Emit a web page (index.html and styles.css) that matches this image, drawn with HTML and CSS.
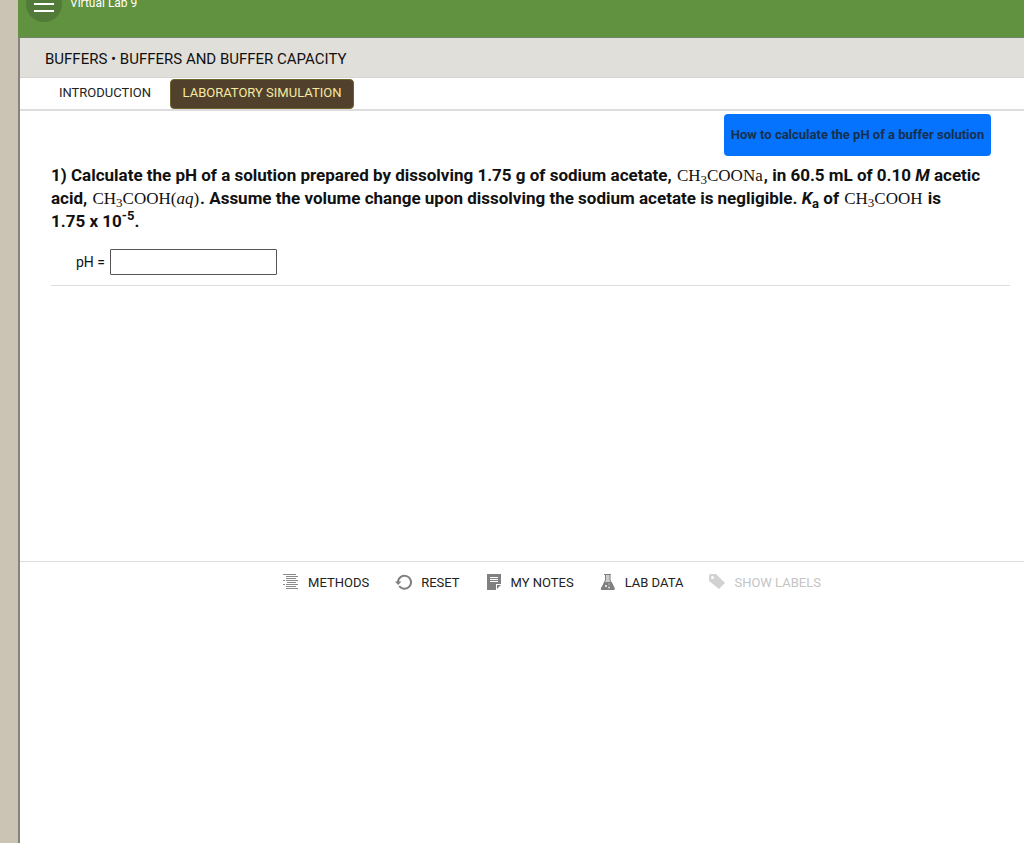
FILE: index.html
```html
<!DOCTYPE html>
<html lang="en">
<head>
    <meta charset="UTF-8">
    <meta name="viewport" content="width=device-width, initial-scale=1.0">
    <title>Virtual Lab 9</title>
    <link rel="stylesheet" href="styles.css">
</head>
<body>
    <div class="page">
        <header class="topbar">
            <button class="menu" type="button" aria-label="Menu">
                <svg width="20" height="18" viewBox="0 0 20 18" stroke="#fff" stroke-width="2">
                    <path d="M0 2h20M0 9h20M0 16h20"/>
                </svg>
            </button>
            <span class="lab-name">Virtual Lab 9</span>
        </header>

        <h1 class="title">BUFFERS • BUFFERS AND BUFFER CAPACITY</h1>

        <nav class="tabs">
            <a href="#introduction" class="tab">INTRODUCTION</a>
            <a href="#simulation" class="tab active">LABORATORY SIMULATION</a>
        </nav>

        <main class="content">
            <button class="help" type="button">How to calculate the pH of a buffer solution</button>
            <div class="question">
                <p class="prompt">
                    1) Calculate the pH of a solution prepared by dissolving 1.75 g of sodium acetate, <span class="chem">CH<sub>3</sub>COONa</span>, in 60.5 mL of 0.10 <em>M</em> acetic<br>
                    acid, <span class="chem">CH<sub>3</sub>COOH(<i>aq</i>)</span>. Assume the volume change upon dissolving the sodium acetate is negligible. <em>K</em><sub>a</sub> of <span class="chem">CH<sub>3</sub>COOH</span> is<br>
                    1.75 x 10<sup>-5</sup>.
                </p>
                <div class="answer">
                    <label for="ph">pH =</label>
                    <input type="text" id="ph">
                </div>
            </div>
        </main>

        <div class="toolbar">
            <button class="tool methods" type="button">
                <svg width="16" height="18" viewBox="0 0 16 18" stroke="#8a8a8a" stroke-width="1">
                    <path d="M0 1.5h13M3 3.5h12M3 5.5h10M0 7.5h2M3 7.5h12M4 9.5h9M0 11.5h2M3 11.5h12M3 13.5h10M3 15.5h12"/>
                </svg>
                METHODS
            </button>
            <button class="tool reset" type="button">
                <svg width="17" height="18" viewBox="0 0 17 18" fill="none">
                    <path d="M3 9A6.500 6.500 0 1 1 4.200 13" stroke="#808080" stroke-width="2"/>
                    <path d="M0 8.500h6.500L3.200 12z" fill="#808080"/>
                </svg>
                RESET
            </button>
            <button class="tool notes" type="button">
                <svg width="16" height="18" viewBox="0 0 16 18">
                    <path d="M1 1h14v10h-5v6H1z" fill="#808080"/>
                    <path d="M11 12h4l-4 4z" fill="#808080"/>
                    <path d="M4 4.5h8M4 6.5h8M4 8.5h8" stroke="#fff"/>
                </svg>
                MY NOTES
            </button>
            <button class="tool data" type="button">
                <svg width="16" height="18" viewBox="0 0 16 18">
                    <path d="M4 1.5h7" stroke="#808080"/>
                    <path d="M5.500 2v5L2 15v1.500h12V15L10 7V2" fill="#ccc" stroke="#808080"/>
                    <path d="M4.500 9h7l3 6v2H1v-2z" fill="#808080"/>
                    <circle cx="6" cy="13" r="1" fill="#fff"/>
                    <circle cx="9" cy="14.500" r="1" fill="#ddd"/>
                    <circle cx="9" cy="11" r=".6" fill="#fff"/>
                </svg>
                LAB DATA
            </button>
            <button class="tool labels" type="button" disabled>
                <svg width="16" height="18" viewBox="0 0 16 18">
                    <path d="M0 3q0-2 2-2h5l9 9-6 6L0 8z" fill="#d2d2d2"/>
                    <circle cx="3.500" cy="4.500" r="1.500" fill="#fff"/>
                </svg>
                SHOW LABELS
            </button>
        </div>
    </div>
</body>
</html>
```

FILE: styles.css
```css
* {
    box-sizing: border-box;
}
body {
    margin: 0;
    padding-left: 18px;
    background-color: #cbc3b3;
    color: #111;
    font-family: Roboto, "Liberation Sans", sans-serif;
    font-size: 14px;
}
button {
    font: inherit;
    border: none;
    cursor: pointer;
}
.page {
    display: flow-root;
    min-height: 100vh;
    background: #fff;
    border-left: 2px solid #86837c;
}
.topbar {
    display: flex;
    align-items: center;
    gap: 8px;
    height: 64px;
    margin: -26px 0 0 -2px;
    padding: 0 8px 4px;
    background: #61923f;
    border-bottom: 1px solid #71856a;
    color: #fff;
}
.menu {
    display: flex;
    align-items: center;
    justify-content: center;
    width: 36px;
    height: 36px;
    padding: 0;
    border-radius: 50%;
    background: #527b39;
}
.lab-name {
    font-size: 12px;
    padding-bottom: 2px;
}
.title {
    margin: 0;
    padding: 0 25px;
    background: #e1dfda;
    border-bottom: 1px solid #d6d4d0;
    font-size: 15px;
    font-weight: normal;
    line-height: 42px;
    height: 40px;
}
.tabs {
    display: flex;
    gap: 5px;
    height: 33px;
    padding: 1px 25px 0;
    border-bottom: 2px solid #ddd;
}
.tab {
    width: 120px;
    font-size: 13px;
    line-height: 28px;
    text-align: center;
    text-decoration: none;
    color: #222;
}
.tab.active {
    width: 184px;
    height: 30px;
    border: 1px solid #6d642d;
    border-radius: 4px;
    background: #50402c;
    color: #f5eaa0;
    line-height: 26px;
}
.content {
    display: flex;
    flex-direction: column;
    min-height: 450px;
    padding: 3px 14px 0 31px;
}
.help {
    align-self: flex-end;
    width: 267px;
    height: 42px;
    margin-right: 19px;
    padding: 0 0 2px;
    border-radius: 4px;
    background: #0673fe;
    color: #15314f;
    font-size: 13px;
    font-weight: bold;
}
.question {
    padding: 8px 0 10px;
    border-bottom: 1px solid #ddd;
}
.prompt {
    margin: 0;
    font-size: 17px;
    font-weight: bold;
    line-height: 23px;
    white-space: nowrap;
}
.prompt sub,
.prompt sup {
    font-size: 13px;
    line-height: 0;
}
.prompt .chem sub {
    vertical-align: -3px;
}
.chem {
    margin: 0 1px;
    font-family: "Liberation Serif", serif;
    font-size: 17px;
    font-weight: normal;
    line-height: 0;
}
.answer {
    display: flex;
    align-items: center;
    gap: 5px;
    margin-top: 16px;
    padding-left: 25px;
}
.answer input {
    width: 167px;
    height: 26px;
    border: 1px solid #555;
    border-radius: 1px;
    background: #fff;
}
.toolbar {
    display: flex;
    justify-content: center;
    gap: 26px;
    padding: 11px 0 11px 60px;
    border-top: 1px solid #ddd;
}
.tool {
    display: flex;
    align-items: center;
    gap: 9px;
    padding: 0;
    background: none;
    color: #222;
    font-size: 13px;
}
.tool:disabled {
    color: #c4c4c4;
}
```
